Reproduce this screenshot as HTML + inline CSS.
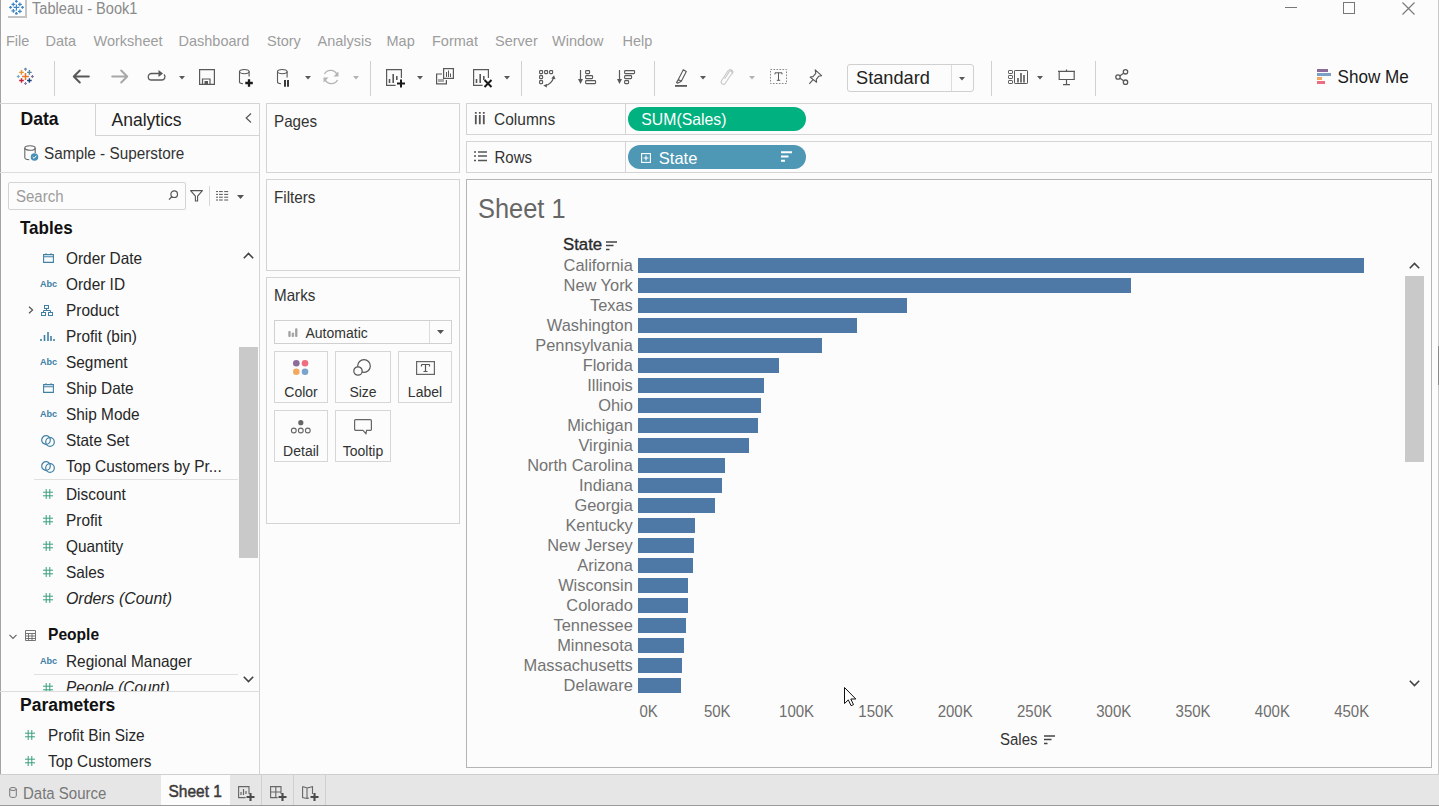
<!DOCTYPE html>
<html><head><meta charset="utf-8">
<style>
*{box-sizing:border-box;margin:0;padding:0}
html,body{width:1439px;height:806px;overflow:hidden;background:#fcfcfc;font-family:"Liberation Sans",sans-serif;color:#333;position:relative}
.a{position:absolute;white-space:nowrap}
.t{position:absolute;white-space:nowrap;line-height:1}
svg{position:absolute;overflow:visible}
</style></head><body>
<div class="a" style="left:0px;top:0px;width:1px;height:806px;background:#a3a3a3;"></div>
<div class="t" style="left:32px;top:1.64px;font-size:14.6px;color:#8a8a8a;transform:scaleY(1.07);transform-origin:0 12.36px;">Tableau - Book1</div>
<div class="t" style="left:6px;top:33.53px;font-size:14.5px;color:#9d9d9d;transform:scaleY(1.07);transform-origin:0 12.27px;">File</div>
<div class="t" style="left:45.5px;top:33.53px;font-size:14.5px;color:#9d9d9d;transform:scaleY(1.07);transform-origin:0 12.27px;">Data</div>
<div class="t" style="left:93.5px;top:33.53px;font-size:14.5px;color:#9d9d9d;transform:scaleY(1.07);transform-origin:0 12.27px;">Worksheet</div>
<div class="t" style="left:178.5px;top:33.53px;font-size:14.5px;color:#9d9d9d;transform:scaleY(1.07);transform-origin:0 12.27px;">Dashboard</div>
<div class="t" style="left:267px;top:33.53px;font-size:14.5px;color:#9d9d9d;transform:scaleY(1.07);transform-origin:0 12.27px;">Story</div>
<div class="t" style="left:317.5px;top:33.53px;font-size:14.5px;color:#9d9d9d;transform:scaleY(1.07);transform-origin:0 12.27px;">Analysis</div>
<div class="t" style="left:386.5px;top:33.53px;font-size:14.5px;color:#9d9d9d;transform:scaleY(1.07);transform-origin:0 12.27px;">Map</div>
<div class="t" style="left:432px;top:33.53px;font-size:14.5px;color:#9d9d9d;transform:scaleY(1.07);transform-origin:0 12.27px;">Format</div>
<div class="t" style="left:495px;top:33.53px;font-size:14.5px;color:#9d9d9d;transform:scaleY(1.07);transform-origin:0 12.27px;">Server</div>
<div class="t" style="left:552px;top:33.53px;font-size:14.5px;color:#9d9d9d;transform:scaleY(1.07);transform-origin:0 12.27px;">Window</div>
<div class="t" style="left:622.5px;top:33.53px;font-size:14.5px;color:#9d9d9d;transform:scaleY(1.07);transform-origin:0 12.27px;">Help</div>
<!-- title icon -->
<div class="a" style="left:8px;top:16px;width:19px;height:2px;background:#c4c4c4"></div>
<div class="a" style="left:25px;top:0;width:2px;height:17px;background:#c4c4c4"></div>
<div class="a" style="left:8px;top:0;width:17px;height:16px;background:#fff"></div>
<svg style="left:8px;top:0" width="17" height="16" viewBox="0 0 17 16">
<g stroke="#3f86c4" stroke-width="1.2">
<path d="M8.4 4.6v5.8M5.6 7.4h5.6"/>
<path d="M5.3 2.5v3.8M3.4 4.3h3.8M11.9 2.5v3.8M10 4.3h3.8M5.3 9v3.8M3.4 10.9h3.8M11.9 9.5v3.8M10 11.4h3.8"/>
<path d="M8.4 0v2.8M7 1.4h2.8M8.4 12v2.8M7 13.5h2.8M2.5 6v2.8M1.1 7.4h2.8M14.5 6v2.8M13.1 7.4h2.8" stroke-width="1.3"/>
</g></svg>
<!-- window controls -->
<div class="a" style="left:1285px;top:7px;width:12px;height:1px;background:#777"></div>
<div class="a" style="left:1343px;top:2px;width:12px;height:12px;border:1px solid #777"></div>
<svg style="left:1402px;top:2px" width="13" height="13" viewBox="0 0 13 13"><path d="M0.5 0.5L12.5 12.5M12.5 0.5L0.5 12.5" stroke="#777" stroke-width="1.1"/></svg>
<div class="a" style="left:1438px;top:0;width:1px;height:806px;background:#c8c8c8"></div>
<!-- toolbar -->
<svg style="left:17px;top:68px" width="18" height="18" viewBox="0 0 18 18">
<g stroke-width="1.5">
<path d="M8.5 5.1v6.8M5.1 8.5h6.8" stroke="#e8762c"/>
<path d="M4.5 2.1v4.6M2.2 4.4h4.6" stroke="#eb912b" stroke-width="1.4"/>
<path d="M12.4 2.1v4.6M10.1 4.4h4.6" stroke="#5b879b" stroke-width="1.4"/>
<path d="M4.5 10.2v4.6M2.2 12.5h4.6" stroke="#c72037" stroke-width="1.4"/>
<path d="M12.4 10.2v4.6M10.1 12.5h4.6" stroke="#1f457e" stroke-width="1.4"/>
<path d="M8.5 -0.3v3M7 1.2h3" stroke="#7087b0" stroke-width="1.2"/>
<path d="M8.5 14v3M7 15.5h3" stroke="#8e7cb8" stroke-width="1.2"/>
<path d="M1.3 7v3M-0.2 8.5h3" stroke="#74a9c4" stroke-width="1.2"/>
<path d="M15.4 7v3M13.9 8.5h3" stroke="#7b74a8" stroke-width="1.2"/>
</g></svg>
<div class="a" style="left:54px;top:61px;width:1px;height:35px;background:#d0d0d0"></div>
<svg style="left:72px;top:69px" width="18" height="16" viewBox="0 0 18 16"><path d="M16.8 7.5H2.5M7.8 1.5L1.8 7.5L7.8 13.5" fill="none" stroke="#595959" stroke-width="2" stroke-linecap="round" stroke-linejoin="round"/></svg>
<svg style="left:111px;top:69px" width="18" height="16" viewBox="0 0 18 16"><path d="M1.2 7.5h14.3M10.2 1.5L16.2 7.5L10.2 13.5" fill="none" stroke="#a8a8a8" stroke-width="2" stroke-linecap="round" stroke-linejoin="round"/></svg>
<svg style="left:147px;top:69px" width="20" height="13" viewBox="0 0 20 13"><path d="M13 4.5H4.5a3.2 3.2 0 0 0 0 6.5h10a3.2 3.2 0 0 0 2.5-5.5" fill="none" stroke="#595959" stroke-width="1.3"/><path d="M11.5 1L16 4.5L11.5 8z" fill="#595959"/></svg>
<svg style="left:179px;top:76px" width="6" height="4" viewBox="0 0 6 4"><path d="M0 0h6L3 3.5z" fill="#595959"/></svg>

<svg style="left:199px;top:69px" width="16" height="16" viewBox="0 0 16 16"><path d="M0.6 0.6h14.8v14.8H0.6z" fill="none" stroke="#595959" stroke-width="1.2"/><path d="M3.5 15.4V10h7.5v5.4" fill="none" stroke="#595959" stroke-width="1.2"/><rect x="5.5" y="12" width="3.5" height="3.4" fill="#595959"/></svg>
<svg style="left:239px;top:69px" width="16" height="19" viewBox="0 0 16 19"><ellipse cx="5.3" cy="2.6" rx="4.8" ry="2.1" fill="none" stroke="#595959" stroke-width="1.1"/><path d="M0.5 2.6v10.4c0 0.9 1.3 1.6 3.5 1.8M10.1 2.6v5" fill="none" stroke="#595959" stroke-width="1.1"/><path d="M10 10.3v7.5M6.3 14h7.5" stroke="#1a1a1a" stroke-width="2.3"/></svg>
<svg style="left:277px;top:69px" width="16" height="19" viewBox="0 0 16 19"><ellipse cx="5.3" cy="2.6" rx="4.8" ry="2.1" fill="none" stroke="#595959" stroke-width="1.1"/><path d="M0.5 2.6v10.4c0 0.9 1.3 1.6 3.5 1.8M10.1 2.6v5.8" fill="none" stroke="#595959" stroke-width="1.1"/><path d="M8 11v6.8M11 11v6.8" stroke="#1a1a1a" stroke-width="1.7"/></svg>
<svg style="left:305px;top:76px" width="6" height="4" viewBox="0 0 6 4"><path d="M0 0h6L3 3.5z" fill="#595959"/></svg>
<svg style="left:322px;top:69px" width="18" height="16" viewBox="0 0 18 16"><path d="M15 5.5A7 7 0 0 0 2.5 5M3 10.5a7 7 0 0 0 12.5 0.5" fill="none" stroke="#b3b3b3" stroke-width="1.4"/><path d="M16.5 2.5v5h-5z M1.5 13.5v-5h5z" fill="#b3b3b3"/></svg>
<svg style="left:353px;top:76px" width="6" height="4" viewBox="0 0 6 4"><path d="M0 0h6L3 3.5z" fill="#b3b3b3"/></svg>
<div class="a" style="left:370px;top:61px;width:1px;height:35px;background:#d0d0d0"></div>
<svg style="left:386px;top:69px" width="20" height="19" viewBox="0 0 20 19"><path d="M15.4 9V0.6H0.6v15.8h9" fill="none" stroke="#595959" stroke-width="1.2"/><path d="M3.5 10v4M7.2 5v9M10.8 7v4" stroke="#595959" stroke-width="1.6"/><path d="M15 10.5v8M11 14.5h8" stroke="#1a1a1a" stroke-width="2"/></svg>
<svg style="left:417px;top:76px" width="6" height="4" viewBox="0 0 6 4"><path d="M0 0h6L3 3.5z" fill="#595959"/></svg>
<svg style="left:436px;top:68px" width="18" height="17" viewBox="0 0 18 17"><rect x="7.6" y="0.6" width="9.8" height="9.8" fill="none" stroke="#595959" stroke-width="1.2"/><path d="M6 6H0.6v9.8h9.8V12" fill="none" stroke="#595959" stroke-width="1.2"/><path d="M10.5 4v5M12.5 2.5v6.5M14.5 5.5v3.5M3 11v3M5 11v3M7 11v3" stroke="#595959" stroke-width="1"/></svg>
<svg style="left:473px;top:69px" width="20" height="19" viewBox="0 0 20 19"><path d="M15.4 9V0.6H0.6v15.8h9" fill="none" stroke="#595959" stroke-width="1.2"/><path d="M3.5 10v4M7.2 5v9M10.8 7v4" stroke="#595959" stroke-width="1.6"/><path d="M11.5 11l7 7M18.5 11l-7 7" stroke="#1a1a1a" stroke-width="2"/></svg>
<svg style="left:504px;top:76px" width="6" height="4" viewBox="0 0 6 4"><path d="M0 0h6L3 3.5z" fill="#595959"/></svg>
<div class="a" style="left:521px;top:61px;width:1px;height:35px;background:#d0d0d0"></div>
<svg style="left:539px;top:70px" width="18" height="18" viewBox="0 0 18 18"><g fill="none" stroke="#595959" stroke-width="1.1"><rect x="0.6" y="0.6" width="3" height="3" rx="0.6"/><rect x="5.6" y="0.6" width="3" height="3" rx="0.6"/><rect x="10.6" y="0.6" width="3" height="3" rx="0.6"/><rect x="0.6" y="5.6" width="3" height="3" rx="0.6"/><rect x="0.6" y="10.6" width="3" height="3" rx="0.6"/><path d="M6.5 15.5Q12.5 14 14.5 8"/></g><path d="M12.3 8.5L15 5.3L16.5 9.3z M8 14L4.2 15.5L7.8 17.5z" fill="#595959"/></svg>
<svg style="left:577px;top:70px" width="20" height="16" viewBox="0 0 20 16"><path d="M3.5 0v10" stroke="#595959" stroke-width="1.2"/><path d="M1 9h5L3.5 14z" fill="#595959"/><rect x="8.6" y="0.6" width="4" height="3" rx="0.8" fill="none" stroke="#595959" stroke-width="1.1"/><rect x="8.6" y="5.6" width="7" height="3" rx="0.8" fill="none" stroke="#595959" stroke-width="1.1"/><rect x="8.6" y="10.6" width="10" height="3" rx="0.8" fill="none" stroke="#595959" stroke-width="1.1"/></svg>
<svg style="left:616px;top:70px" width="20" height="16" viewBox="0 0 20 16"><path d="M3.5 0v10" stroke="#595959" stroke-width="1.2"/><path d="M1 9h5L3.5 14z" fill="#595959"/><rect x="8.6" y="0.6" width="10" height="3" rx="0.8" fill="none" stroke="#595959" stroke-width="1.1"/><rect x="8.6" y="5.6" width="7" height="3" rx="0.8" fill="none" stroke="#595959" stroke-width="1.1"/><rect x="8.6" y="10.6" width="4" height="3" rx="0.8" fill="none" stroke="#595959" stroke-width="1.1"/></svg>
<div class="a" style="left:654px;top:61px;width:1px;height:35px;background:#d0d0d0"></div>
<svg style="left:675px;top:69px" width="13" height="18" viewBox="0 0 13 18"><path d="M8.3 0.7l3 1.7L6.3 12.3l-3-1.7z M3.3 10.6L1.5 13.6l1.2 0.7L6.3 12.3" fill="none" stroke="#595959" stroke-width="1.1" stroke-linejoin="round"/><rect x="0" y="16" width="12" height="1.8" fill="#595959"/></svg>
<svg style="left:700px;top:76px" width="6" height="4" viewBox="0 0 6 4"><path d="M0 0h6L3 3.5z" fill="#595959"/></svg>
<svg style="left:720px;top:69px" width="14" height="16" viewBox="0 0 14 16"><path d="M4.8 9.5L9.3 2.6a1.6 1.6 0 0 1 2.7 1.7L5.3 14.3a2.3 2.3 0 0 1-3.9-2.4L8 1.8a2.6 2.6 0 0 1 4.4 2.8" fill="none" stroke="#c8c8c8" stroke-width="1.1" stroke-linecap="round"/></svg>
<svg style="left:749px;top:76px" width="6" height="4" viewBox="0 0 6 4"><path d="M0 0h6L3 3.5z" fill="#b3b3b3"/></svg>
<svg style="left:770px;top:69px" width="18" height="16" viewBox="0 0 18 16"><rect x="0.5" y="0.5" width="16" height="14" fill="none" stroke="#888" stroke-dasharray="1.6 1.4"/><path d="M5 3.8h7M8.5 3.8v7.5M6.8 11.3h3.4M5 3.8v1.6M12 3.8v1.6" fill="none" stroke="#595959" stroke-width="1"/></svg>
<svg style="left:808px;top:69px" width="15" height="16" viewBox="0 0 15 16"><path d="M7.2 0.8L13.6 6.6L10.8 7.2L8.3 10.3L8.6 13.3L2.1 8.1L5 7.6L7.8 4.3z M4.8 10.8L1.3 14.9" fill="none" stroke="#595959" stroke-width="1.1" stroke-linejoin="round"/></svg>
<div class="a" style="left:847px;top:64px;width:127px;height:28px;border:1px solid #d0d0d0;border-radius:3px;background:#fcfcfc"></div>
<div class="a" style="left:951px;top:65px;width:1px;height:26px;background:#dcdcdc"></div>
<div class="t" style="left:856px;top:69.2px;font-size:18.2px;color:#222">Standard</div>
<svg style="left:959px;top:77px" width="6" height="4" viewBox="0 0 6 4"><path d="M0 0h6L3 3.5z" fill="#595959"/></svg>
<div class="a" style="left:991px;top:61px;width:1px;height:35px;background:#d0d0d0"></div>
<svg style="left:1008px;top:70px" width="21" height="15" viewBox="0 0 21 15"><g fill="none" stroke="#595959" stroke-width="1"><rect x="0.5" y="0.5" width="4" height="3" rx="0.6"/><rect x="0.5" y="5.5" width="4" height="3" rx="0.6"/><rect x="0.5" y="10.5" width="4" height="3" rx="0.6"/><rect x="6.5" y="0.5" width="13" height="13" rx="0.6"/></g><path d="M10 8v4.5M13 3v9.5M16 5v7.5" stroke="#595959" stroke-width="1.6"/></svg>
<svg style="left:1037px;top:76px" width="6" height="4" viewBox="0 0 6 4"><path d="M0 0h6L3 3.5z" fill="#595959"/></svg>
<svg style="left:1058px;top:69px" width="18" height="17" viewBox="0 0 18 17"><path d="M8.5 0.5v1.5M0 2.3h17M1.2 2.3v8.2h15v-8.2M8.5 10.5v5M5 15.6h7" fill="none" stroke="#595959" stroke-width="1.2"/></svg>
<div class="a" style="left:1095px;top:61px;width:1px;height:35px;background:#d0d0d0"></div>
<svg style="left:1114px;top:69px" width="16" height="17" viewBox="0 0 16 17"><g fill="none" stroke="#595959" stroke-width="1.3"><circle cx="11.5" cy="2.8" r="2.2"/><circle cx="4" cy="8" r="2.2"/><circle cx="11.5" cy="13.2" r="2.2"/><path d="M6 6.7L9.6 4.2M6 9.3L9.6 11.8"/></g></svg>
<div class="a" style="left:1317px;top:69px;width:11px;height:3px;background:#8d6b99"></div>
<div class="a" style="left:1317px;top:73px;width:14px;height:3px;background:#7c9fc7"></div>
<div class="a" style="left:1317px;top:77px;width:5px;height:3px;background:#f2a95e"></div>
<div class="a" style="left:1317px;top:81px;width:8px;height:3px;background:#ec6d7f"></div>
<div class="t" style="left:1337.5px;top:68.8px;font-size:17.1px;color:#1a1a1a;transform:scaleY(1.07);transform-origin:0 14.4px">Show Me</div>

<!-- left panel -->


<div class="a" style="left:0px;top:103px;width:260px;height:1px;background:#d4d4d4;"></div>
<div class="a" style="left:259px;top:103px;width:1px;height:671px;background:#d4d4d4;"></div>
<div class="a" style="left:95px;top:103px;width:1px;height:33px;background:#d4d4d4;"></div>
<div class="a" style="left:95px;top:135px;width:165px;height:1px;background:#d4d4d4;"></div>
<div class="t" style="left:20.5px;top:111.1px;font-size:17.6px;color:#111;font-weight:700;transform:scaleY(1.07);transform-origin:0 14.9px;">Data</div>
<div class="t" style="left:111.5px;top:112.19px;font-size:17.5px;color:#222;transform:scaleY(1.07);transform-origin:0 14.81px;">Analytics</div>
<svg style="left:245px;top:113px" width="7" height="10" viewBox="0 0 7 10"><path d="M6 0.5L1.2 5L6 9.5" fill="none" stroke="#555" stroke-width="1.2"/></svg>
<svg style="left:24px;top:145px" width="16" height="17" viewBox="0 0 16 17"><ellipse cx="6" cy="3" rx="5.2" ry="2.3" fill="none" stroke="#666" stroke-width="1.1"/><path d="M0.8 3v9.5c0 1.2 2 2.1 4.5 2.3M11.2 3v5" fill="none" stroke="#666" stroke-width="1.1"/><circle cx="10.5" cy="12" r="3.8" fill="#4a8fb5"/><path d="M8.7 12l1.3 1.3l2.4-2.6" fill="none" stroke="#fff" stroke-width="1"/></svg>
<div class="t" style="left:44px;top:146.05px;font-size:15.3px;color:#333;transform:scaleY(1.07);transform-origin:0 12.95px;">Sample - Superstore</div>
<div class="a" style="left:0px;top:172px;width:259px;height:1px;background:#dcdcdc;"></div>
<div class="a" style="left:8px;top:182px;width:178px;height:28px;border:1px solid #d4d4d4;border-radius:2px;background:#fcfcfc"></div>
<div class="t" style="left:16px;top:189.3px;font-size:15px;color:#9b9b9b;transform:scaleY(1.07);transform-origin:0 12.7px;">Search</div>
<svg style="left:168px;top:189px" width="12" height="12" viewBox="0 0 12 12"><circle cx="6.2" cy="5.2" r="3.3" fill="none" stroke="#555" stroke-width="1.2"/><path d="M4 7.5L1 10.6" stroke="#555" stroke-width="1.3"/></svg>
<svg style="left:190px;top:190px" width="13" height="12" viewBox="0 0 13 12"><path d="M0.6 0.6h11.8L7.6 6.2v4.8h-2.2V6.2z" fill="none" stroke="#555" stroke-width="1.1" stroke-linejoin="round"/></svg>
<div class="a" style="left:209px;top:186px;width:1px;height:20px;background:#d8d8d8;"></div>
<svg style="left:216px;top:190.5px" width="13" height="10" viewBox="0 0 13 10"><path d="M0 0.6h2M0 3.4h2M0 6.2h2M0 9h2M3 0.6h3.8M3 3.4h3.8M3 6.2h3.8M3 9h3.8M8.2 0.6h4M8.2 3.4h4M8.2 6.2h4M8.2 9h4" stroke="#555" stroke-width="1"/></svg>
<svg style="left:237px;top:195px" width="7" height="4" viewBox="0 0 7 4"><path d="M0 0h7L3.5 4z" fill="#555"/></svg>
<div class="t" style="left:20px;top:219.61px;font-size:17px;color:#111;font-weight:700;transform:scaleY(1.07);transform-origin:0 14.39px;">Tables</div>
<svg style="left:243px;top:252px" width="11" height="7" viewBox="0 0 11 7"><path d="M0.8 6.3L5.5 1.5L10.2 6.3" fill="none" stroke="#444" stroke-width="1.6"/></svg>
<svg style="left:42.5px;top:253px" width="11" height="10" viewBox="0 0 11 10"><path d="M0.6 1.6h9.8v7.8H0.6z M0.6 3.8h9.8 M3 0.2v2 M8 0.2v2" fill="none" stroke="#3f80a6" stroke-width="1.1"/></svg>
<div class="t" style="left:66px;top:250.96px;font-size:15.4px;color:#262626;transform:scaleY(1.07);transform-origin:0 13.04px;">Order Date</div>
<div class="t" style="left:40px;top:279px;font-size:9.6px;font-weight:700;color:#3f80a6;letter-spacing:-0.1px;transform:scaleX(0.95);transform-origin:0 0">Abc</div>
<div class="t" style="left:66px;top:276.96px;font-size:15.4px;color:#262626;transform:scaleY(1.07);transform-origin:0 13.04px;">Order ID</div>
<svg style="left:41px;top:305px" width="12" height="11" viewBox="0 0 12 11"><g fill="none" stroke="#3f80a6" stroke-width="1"><rect x="3.5" y="0.5" width="4" height="3"/><rect x="0.5" y="7.5" width="4" height="3"/><rect x="7.5" y="7.5" width="4" height="3"/><path d="M5.5 3.5v2M2.5 7.5V5.5h7v2"/></g></svg>
<div class="t" style="left:66px;top:302.96px;font-size:15.4px;color:#262626;transform:scaleY(1.07);transform-origin:0 13.04px;">Product</div>
<svg style="left:40px;top:331px" width="15" height="10" viewBox="0 0 15 10"><path d="M1 8v2M4.5 4v6M8 1v9M11 5v5M14 8v2" stroke="#3f80a6" stroke-width="1.6"/></svg>
<div class="t" style="left:66px;top:328.96px;font-size:15.4px;color:#262626;transform:scaleY(1.07);transform-origin:0 13.04px;">Profit (bin)</div>
<div class="t" style="left:40px;top:357px;font-size:9.6px;font-weight:700;color:#3f80a6;letter-spacing:-0.1px;transform:scaleX(0.95);transform-origin:0 0">Abc</div>
<div class="t" style="left:66px;top:354.96px;font-size:15.4px;color:#262626;transform:scaleY(1.07);transform-origin:0 13.04px;">Segment</div>
<svg style="left:42.5px;top:383px" width="11" height="10" viewBox="0 0 11 10"><path d="M0.6 1.6h9.8v7.8H0.6z M0.6 3.8h9.8 M3 0.2v2 M8 0.2v2" fill="none" stroke="#3f80a6" stroke-width="1.1"/></svg>
<div class="t" style="left:66px;top:380.96px;font-size:15.4px;color:#262626;transform:scaleY(1.07);transform-origin:0 13.04px;">Ship Date</div>
<div class="t" style="left:40px;top:409px;font-size:9.6px;font-weight:700;color:#3f80a6;letter-spacing:-0.1px;transform:scaleX(0.95);transform-origin:0 0">Abc</div>
<div class="t" style="left:66px;top:406.96px;font-size:15.4px;color:#262626;transform:scaleY(1.07);transform-origin:0 13.04px;">Ship Mode</div>
<svg style="left:41px;top:435px" width="14" height="12" viewBox="0 0 14 12"><circle cx="5" cy="5" r="4.3" fill="none" stroke="#3f80a6" stroke-width="1.2"/><circle cx="9" cy="7" r="4.3" fill="none" stroke="#3f80a6" stroke-width="1.2"/></svg>
<div class="t" style="left:66px;top:432.96px;font-size:15.4px;color:#262626;transform:scaleY(1.07);transform-origin:0 13.04px;">State Set</div>
<svg style="left:41px;top:461px" width="14" height="12" viewBox="0 0 14 12"><circle cx="5" cy="5" r="4.3" fill="none" stroke="#3f80a6" stroke-width="1.2"/><circle cx="9" cy="7" r="4.3" fill="none" stroke="#3f80a6" stroke-width="1.2"/></svg>
<div class="t" style="left:66px;top:458.96px;font-size:15.4px;color:#262626;transform:scaleY(1.07);transform-origin:0 13.04px;">Top Customers by Pr...</div>
<svg style="left:28px;top:306px" width="6" height="8" viewBox="0 0 6 8"><path d="M1 0.7L4.6 4L1 7.3" fill="none" stroke="#555" stroke-width="1.2"/></svg>
<div class="a" style="left:34px;top:479px;width:204px;height:1px;background:#e0e0e0;"></div>
<svg style="left:43px;top:489px" width="10" height="10" viewBox="0 0 10 10"><path d="M3.2 0v10M6.8 0v10M0 3.2h10M0 6.8h10" stroke="#3a9f7f" stroke-width="1"/></svg>
<div class="t" style="left:66px;top:486.96px;font-size:15.4px;color:#262626;transform:scaleY(1.07);transform-origin:0 13.04px;">Discount</div>
<svg style="left:43px;top:515px" width="10" height="10" viewBox="0 0 10 10"><path d="M3.2 0v10M6.8 0v10M0 3.2h10M0 6.8h10" stroke="#3a9f7f" stroke-width="1"/></svg>
<div class="t" style="left:66px;top:512.96px;font-size:15.4px;color:#262626;transform:scaleY(1.07);transform-origin:0 13.04px;">Profit</div>
<svg style="left:43px;top:541px" width="10" height="10" viewBox="0 0 10 10"><path d="M3.2 0v10M6.8 0v10M0 3.2h10M0 6.8h10" stroke="#3a9f7f" stroke-width="1"/></svg>
<div class="t" style="left:66px;top:538.96px;font-size:15.4px;color:#262626;transform:scaleY(1.07);transform-origin:0 13.04px;">Quantity</div>
<svg style="left:43px;top:567px" width="10" height="10" viewBox="0 0 10 10"><path d="M3.2 0v10M6.8 0v10M0 3.2h10M0 6.8h10" stroke="#3a9f7f" stroke-width="1"/></svg>
<div class="t" style="left:66px;top:564.96px;font-size:15.4px;color:#262626;transform:scaleY(1.07);transform-origin:0 13.04px;">Sales</div>
<svg style="left:43px;top:593px" width="10" height="10" viewBox="0 0 10 10"><path d="M3.2 0v10M6.8 0v10M0 3.2h10M0 6.8h10" stroke="#3a9f7f" stroke-width="1"/></svg>
<div class="t" style="left:66px;top:590.54px;font-size:15.9px;color:#262626;font-style:italic;transform:scaleY(1.07);transform-origin:0 13.46px;">Orders (Count)</div>
<div class="a" style="left:239px;top:347px;width:19px;height:211px;background:#c9c9c9;"></div>
<svg style="left:9px;top:634px" width="8" height="6" viewBox="0 0 8 6"><path d="M0.5 0.8L4 4.5L7.5 0.8" fill="none" stroke="#666" stroke-width="1.2"/></svg>
<svg style="left:25px;top:630px" width="11" height="11" viewBox="0 0 11 11"><path d="M0.5 0.5h10v10h-10z M0.5 3.5h10 M0.5 6h10 M0.5 8.5h10 M3.5 3.5v7 M7 3.5v7" fill="none" stroke="#666" stroke-width="0.9"/></svg>
<div class="t" style="left:48px;top:626.79px;font-size:15.6px;color:#111;font-weight:700;transform:scaleY(1.07);transform-origin:0 13.21px;">People</div>
<div class="t" style="left:40px;top:656px;font-size:9.6px;font-weight:700;color:#3f80a6;letter-spacing:-0.1px;transform:scaleX(0.95);transform-origin:0 0">Abc</div>
<div class="t" style="left:66px;top:653.96px;font-size:15.4px;color:#262626;transform:scaleY(1.07);transform-origin:0 13.04px;">Regional Manager</div>
<div class="a" style="left:34px;top:674px;width:204px;height:1px;background:#e0e0e0;"></div>
<div class="a" style="left:0;top:676px;width:238px;height:15px;overflow:hidden"><svg style="left:43px;top:7px" width="10" height="10" viewBox="0 0 10 10"><path d="M3.2 0v10M6.8 0v10M0 3.2h10M0 6.8h10" stroke="#3a9f7f" stroke-width="1"/></svg>
<div class="t" style="left:66px;top:3.96px;font-size:15.4px;color:#262626;font-style:italic;transform:scaleY(1.07);transform-origin:0 13.04px;">People (Count)</div>
</div>
<svg style="left:243px;top:676px" width="11" height="7" viewBox="0 0 11 7"><path d="M0.8 0.7L5.5 5.5L10.2 0.7" fill="none" stroke="#444" stroke-width="1.6"/></svg>
<div class="a" style="left:0px;top:691px;width:259px;height:1px;background:#dcdcdc;"></div>
<div class="t" style="left:20px;top:697.19px;font-size:17.5px;color:#111;font-weight:700;transform:scaleY(1.07);transform-origin:0 14.81px;">Parameters</div>
<svg style="left:25px;top:730px" width="10" height="10" viewBox="0 0 10 10"><path d="M3.2 0v10M6.8 0v10M0 3.2h10M0 6.8h10" stroke="#3a9f7f" stroke-width="1"/></svg>
<div class="t" style="left:48px;top:727.96px;font-size:15.4px;color:#262626;transform:scaleY(1.07);transform-origin:0 13.04px;">Profit Bin Size</div>
<svg style="left:25px;top:756px" width="10" height="10" viewBox="0 0 10 10"><path d="M3.2 0v10M6.8 0v10M0 3.2h10M0 6.8h10" stroke="#3a9f7f" stroke-width="1"/></svg>
<div class="t" style="left:48px;top:753.96px;font-size:15.4px;color:#262626;transform:scaleY(1.07);transform-origin:0 13.04px;">Top Customers</div>
<div class="a" style="left:266px;top:103px;width:194px;height:70px;border:1px solid #d4d4d4;background:#fcfcfc;"></div>
<div class="t" style="left:274px;top:114.13px;font-size:15.2px;color:#333;transform:scaleY(1.07);transform-origin:0 12.87px;">Pages</div>
<div class="a" style="left:266px;top:179px;width:194px;height:92px;border:1px solid #d4d4d4;background:#fcfcfc;"></div>
<div class="t" style="left:274px;top:190.13px;font-size:15.2px;color:#333;transform:scaleY(1.07);transform-origin:0 12.87px;">Filters</div>
<div class="a" style="left:266px;top:277px;width:194px;height:247px;border:1px solid #d4d4d4;background:#fcfcfc;"></div>
<div class="t" style="left:274px;top:288.13px;font-size:15.2px;color:#333;transform:scaleY(1.07);transform-origin:0 12.87px;">Marks</div>
<div class="a" style="left:274px;top:320px;width:178px;height:24px;border:1px solid #d0d0d0;background:#fcfcfc;"></div>
<div class="a" style="left:429px;top:321px;width:1px;height:22px;background:#dcdcdc;"></div>
<svg style="left:437px;top:330px" width="7" height="4" viewBox="0 0 7 4"><path d="M0 0h7L3.5 4z" fill="#555"/></svg>
<svg style="left:288px;top:327.5px" width="10" height="9" viewBox="0 0 10 9"><path d="M0.8 3.5h1.4v5H0.8z M4.2 5h1.4v3.5H4.2z M7.6 0.8h1.4v7.7H7.6z" fill="#aaa" stroke="#999" stroke-width="0.8"/></svg>
<div class="t" style="left:305.5px;top:325.65px;font-size:14px;color:#333;transform:scaleY(1.07);transform-origin:0 11.85px;">Automatic</div>
<div class="a" style="left:274px;top:351px;width:54px;height:52px;border:1px solid #d6d6d6;background:#fcfcfc;"></div>
<div class="a" style="left:335px;top:351px;width:56px;height:52px;border:1px solid #d6d6d6;background:#fcfcfc;"></div>
<div class="a" style="left:398px;top:351px;width:54px;height:52px;border:1px solid #d6d6d6;background:#fcfcfc;"></div>
<div class="a" style="left:274px;top:410px;width:54px;height:52px;border:1px solid #d6d6d6;background:#fcfcfc;"></div>
<div class="a" style="left:335px;top:410px;width:56px;height:52px;border:1px solid #d6d6d6;background:#fcfcfc;"></div>
<svg style="left:292px;top:359px" width="18" height="17" viewBox="0 0 18 17"><circle cx="4.3" cy="4.3" r="3.3" fill="#8b6c9b"/><circle cx="13" cy="4.3" r="3.3" fill="#ee6f7d"/><circle cx="4.3" cy="12.8" r="3.3" fill="#f2a95e"/><circle cx="13" cy="12.8" r="3.3" fill="#7ba3cc"/></svg>
<div class="t" style="left:201px;width:200px;text-align:center;top:385.15px;font-size:14px;color:#333;transform:scaleY(1.07);transform-origin:50% 11.85px;">Color</div>
<svg style="left:353px;top:359px" width="19" height="17" viewBox="0 0 19 17"><circle cx="11" cy="7" r="6.3" fill="none" stroke="#555" stroke-width="1.2"/><circle cx="5" cy="12" r="4.2" fill="#fcfcfc" stroke="#555" stroke-width="1.2"/></svg>
<div class="t" style="left:263px;width:200px;text-align:center;top:385.15px;font-size:14px;color:#333;transform:scaleY(1.07);transform-origin:50% 11.85px;">Size</div>
<svg style="left:416px;top:361px" width="19" height="14" viewBox="0 0 19 14"><rect x="0.6" y="0.6" width="17.8" height="12.8" fill="none" stroke="#666" stroke-width="1.2"/><path d="M5.5 3.5h8M9.5 3.5v7M7.5 10.5h4M5.5 3.5v2M13.5 3.5v2" fill="none" stroke="#555" stroke-width="1.2"/></svg>
<div class="t" style="left:325px;width:200px;text-align:center;top:385.15px;font-size:14px;color:#333;transform:scaleY(1.07);transform-origin:50% 11.85px;">Label</div>
<svg style="left:291px;top:420px" width="20" height="14" viewBox="0 0 20 14"><circle cx="9.8" cy="2.7" r="2.6" fill="#666"/><circle cx="2.8" cy="10.5" r="2.4" fill="none" stroke="#666" stroke-width="1.1"/><circle cx="9.8" cy="10.5" r="2.4" fill="none" stroke="#666" stroke-width="1.1"/><circle cx="16.8" cy="10.5" r="2.4" fill="none" stroke="#666" stroke-width="1.1"/></svg>
<div class="t" style="left:201px;width:200px;text-align:center;top:444.15px;font-size:14px;color:#333;transform:scaleY(1.07);transform-origin:50% 11.85px;">Detail</div>
<svg style="left:354px;top:419px" width="18" height="16" viewBox="0 0 18 16"><path d="M1.8 0.6h14.4a1.2 1.2 0 0 1 1.2 1.2v8.4a1.2 1.2 0 0 1-1.2 1.2H12.5L12 14.8L9 11.4H1.8a1.2 1.2 0 0 1-1.2-1.2V1.8a1.2 1.2 0 0 1 1.2-1.2z" fill="none" stroke="#666" stroke-width="1.2" stroke-linejoin="round"/></svg>
<div class="t" style="left:263px;width:200px;text-align:center;top:444.15px;font-size:14px;color:#333;transform:scaleY(1.07);transform-origin:50% 11.85px;">Tooltip</div>
<div class="a" style="left:466px;top:103px;width:966px;height:32px;border:1px solid #d4d4d4;background:#fcfcfc;"></div>
<div class="a" style="left:625px;top:104px;width:1px;height:30px;background:#d4d4d4;"></div>
<svg style="left:474px;top:112px" width="12" height="13" viewBox="0 0 12 13"><path d="M1.8 0v1.8M5.8 0v1.8M9.8 0v1.8M1.8 3v9.3M5.8 3v9.3M9.8 3v9.3" stroke="#555" stroke-width="1.8"/></svg>
<div class="t" style="left:494px;top:111.88px;font-size:15.5px;color:#333;transform:scaleY(1.07);transform-origin:0 13.12px;">Columns</div>
<div class="a" style="left:628px;top:107px;width:178px;height:24px;border-radius:12px;background:#01b180"></div>
<div class="t" style="left:641.3px;top:112.13px;font-size:15.8px;color:#fff;transform:scaleY(1.07);transform-origin:0 13.37px;">SUM(Sales)</div>
<div class="a" style="left:466px;top:141px;width:966px;height:32px;border:1px solid #d4d4d4;background:#fcfcfc;"></div>
<div class="a" style="left:625px;top:142px;width:1px;height:30px;background:#d4d4d4;"></div>
<svg style="left:474px;top:151px" width="13" height="11" viewBox="0 0 13 11"><path d="M0 1h2M0 5h2M0 9.5h2M4 1h9M4 5h9M4 9.5h9" stroke="#555" stroke-width="1.7"/></svg>
<div class="t" style="left:494.5px;top:150.3px;font-size:15px;color:#333;transform:scaleY(1.07);transform-origin:0 12.7px;">Rows</div>
<div class="a" style="left:628px;top:145px;width:178px;height:24px;border-radius:12px;background:#4e97b5"></div>
<svg style="left:641px;top:153px" width="10" height="10" viewBox="0 0 10 10"><rect x="0.6" y="0.6" width="8.8" height="8.8" fill="none" stroke="#fff" stroke-width="1.1"/><path d="M5 2.5v5M2.5 5h5" stroke="#fff" stroke-width="1.1"/></svg>
<div class="t" style="left:658.8px;top:150.23px;font-size:16.5px;color:#fff;transform:scaleY(1.07);transform-origin:0 13.97px;transform:none;">State</div>
<svg style="left:781px;top:151px" width="11" height="11" viewBox="0 0 11 11"><path d="M0 1.2h11M0 5.5h7.5M0 9.8h4" stroke="#fff" stroke-width="2"/></svg>
<div class="a" style="left:466px;top:179px;width:966px;height:589px;border:1px solid #b5b5b5;background:#fcfcfc;"></div>
<div class="t" style="left:478px;top:196.5px;font-size:25.4px;color:#666;transform:scaleY(1.07);transform-origin:0 21.5px;">Sheet 1</div>
<div class="t" style="left:563px;top:236.78px;font-size:16.8px;color:#2a2a2a;transform:scaleY(1.07);transform-origin:0 14.22px;-webkit-text-stroke:0.35px #2a2a2a;transform:none;">State</div>
<svg style="left:605.5px;top:241px" width="11" height="10" viewBox="0 0 11 10"><path d="M0 1h11M0 4.5h7.5M0 8.5h3.5" stroke="#444" stroke-width="1.6"/></svg>
<div class="a" style="left:638px;top:258px;width:726px;height:15px;background:#4e79a7;"></div>
<div class="t" style="right:806.2px;top:257.12px;font-size:16.4px;color:#737373;transform:scaleY(1.07);transform-origin:100% 13.88px;transform:none;">California</div>
<div class="a" style="left:638px;top:278px;width:493px;height:15px;background:#4e79a7;"></div>
<div class="t" style="right:806.2px;top:277.12px;font-size:16.4px;color:#737373;transform:scaleY(1.07);transform-origin:100% 13.88px;transform:none;">New York</div>
<div class="a" style="left:638px;top:298px;width:269px;height:15px;background:#4e79a7;"></div>
<div class="t" style="right:806.2px;top:297.12px;font-size:16.4px;color:#737373;transform:scaleY(1.07);transform-origin:100% 13.88px;transform:none;">Texas</div>
<div class="a" style="left:638px;top:318px;width:219px;height:15px;background:#4e79a7;"></div>
<div class="t" style="right:806.2px;top:317.12px;font-size:16.4px;color:#737373;transform:scaleY(1.07);transform-origin:100% 13.88px;transform:none;">Washington</div>
<div class="a" style="left:638px;top:338px;width:184px;height:15px;background:#4e79a7;"></div>
<div class="t" style="right:806.2px;top:337.12px;font-size:16.4px;color:#737373;transform:scaleY(1.07);transform-origin:100% 13.88px;transform:none;">Pennsylvania</div>
<div class="a" style="left:638px;top:358px;width:141px;height:15px;background:#4e79a7;"></div>
<div class="t" style="right:806.2px;top:357.12px;font-size:16.4px;color:#737373;transform:scaleY(1.07);transform-origin:100% 13.88px;transform:none;">Florida</div>
<div class="a" style="left:638px;top:378px;width:126px;height:15px;background:#4e79a7;"></div>
<div class="t" style="right:806.2px;top:377.12px;font-size:16.4px;color:#737373;transform:scaleY(1.07);transform-origin:100% 13.88px;transform:none;">Illinois</div>
<div class="a" style="left:638px;top:398px;width:123px;height:15px;background:#4e79a7;"></div>
<div class="t" style="right:806.2px;top:397.12px;font-size:16.4px;color:#737373;transform:scaleY(1.07);transform-origin:100% 13.88px;transform:none;">Ohio</div>
<div class="a" style="left:638px;top:418px;width:120px;height:15px;background:#4e79a7;"></div>
<div class="t" style="right:806.2px;top:417.12px;font-size:16.4px;color:#737373;transform:scaleY(1.07);transform-origin:100% 13.88px;transform:none;">Michigan</div>
<div class="a" style="left:638px;top:438px;width:111px;height:15px;background:#4e79a7;"></div>
<div class="t" style="right:806.2px;top:437.12px;font-size:16.4px;color:#737373;transform:scaleY(1.07);transform-origin:100% 13.88px;transform:none;">Virginia</div>
<div class="a" style="left:638px;top:458px;width:87px;height:15px;background:#4e79a7;"></div>
<div class="t" style="right:806.2px;top:457.12px;font-size:16.4px;color:#737373;transform:scaleY(1.07);transform-origin:100% 13.88px;transform:none;">North Carolina</div>
<div class="a" style="left:638px;top:478px;width:84px;height:15px;background:#4e79a7;"></div>
<div class="t" style="right:806.2px;top:477.12px;font-size:16.4px;color:#737373;transform:scaleY(1.07);transform-origin:100% 13.88px;transform:none;">Indiana</div>
<div class="a" style="left:638px;top:498px;width:77px;height:15px;background:#4e79a7;"></div>
<div class="t" style="right:806.2px;top:497.12px;font-size:16.4px;color:#737373;transform:scaleY(1.07);transform-origin:100% 13.88px;transform:none;">Georgia</div>
<div class="a" style="left:638px;top:518px;width:57px;height:15px;background:#4e79a7;"></div>
<div class="t" style="right:806.2px;top:517.12px;font-size:16.4px;color:#737373;transform:scaleY(1.07);transform-origin:100% 13.88px;transform:none;">Kentucky</div>
<div class="a" style="left:638px;top:538px;width:56px;height:15px;background:#4e79a7;"></div>
<div class="t" style="right:806.2px;top:537.12px;font-size:16.4px;color:#737373;transform:scaleY(1.07);transform-origin:100% 13.88px;transform:none;">New Jersey</div>
<div class="a" style="left:638px;top:558px;width:55px;height:15px;background:#4e79a7;"></div>
<div class="t" style="right:806.2px;top:557.12px;font-size:16.4px;color:#737373;transform:scaleY(1.07);transform-origin:100% 13.88px;transform:none;">Arizona</div>
<div class="a" style="left:638px;top:578px;width:50px;height:15px;background:#4e79a7;"></div>
<div class="t" style="right:806.2px;top:577.12px;font-size:16.4px;color:#737373;transform:scaleY(1.07);transform-origin:100% 13.88px;transform:none;">Wisconsin</div>
<div class="a" style="left:638px;top:598px;width:50px;height:15px;background:#4e79a7;"></div>
<div class="t" style="right:806.2px;top:597.12px;font-size:16.4px;color:#737373;transform:scaleY(1.07);transform-origin:100% 13.88px;transform:none;">Colorado</div>
<div class="a" style="left:638px;top:618px;width:48px;height:15px;background:#4e79a7;"></div>
<div class="t" style="right:806.2px;top:617.12px;font-size:16.4px;color:#737373;transform:scaleY(1.07);transform-origin:100% 13.88px;transform:none;">Tennessee</div>
<div class="a" style="left:638px;top:638px;width:46px;height:15px;background:#4e79a7;"></div>
<div class="t" style="right:806.2px;top:637.12px;font-size:16.4px;color:#737373;transform:scaleY(1.07);transform-origin:100% 13.88px;transform:none;">Minnesota</div>
<div class="a" style="left:638px;top:658px;width:44px;height:15px;background:#4e79a7;"></div>
<div class="t" style="right:806.2px;top:657.12px;font-size:16.4px;color:#737373;transform:scaleY(1.07);transform-origin:100% 13.88px;transform:none;">Massachusetts</div>
<div class="a" style="left:638px;top:678px;width:43px;height:15px;background:#4e79a7;"></div>
<div class="t" style="right:806.2px;top:677.12px;font-size:16.4px;color:#737373;transform:scaleY(1.07);transform-origin:100% 13.88px;transform:none;">Delaware</div>
<div class="t" style="left:639.5px;top:704.3px;font-size:15px;color:#6e6e6e;transform:scaleY(1.07);transform-origin:0 12.7px;">0K</div>
<div class="t" style="left:617.3px;width:200px;text-align:center;top:704.3px;font-size:15px;color:#6e6e6e;transform:scaleY(1.07);transform-origin:50% 12.7px;">50K</div>
<div class="t" style="left:696.6px;width:200px;text-align:center;top:704.3px;font-size:15px;color:#6e6e6e;transform:scaleY(1.07);transform-origin:50% 12.7px;">100K</div>
<div class="t" style="left:775.9px;width:200px;text-align:center;top:704.3px;font-size:15px;color:#6e6e6e;transform:scaleY(1.07);transform-origin:50% 12.7px;">150K</div>
<div class="t" style="left:855.2px;width:200px;text-align:center;top:704.3px;font-size:15px;color:#6e6e6e;transform:scaleY(1.07);transform-origin:50% 12.7px;">200K</div>
<div class="t" style="left:934.5px;width:200px;text-align:center;top:704.3px;font-size:15px;color:#6e6e6e;transform:scaleY(1.07);transform-origin:50% 12.7px;">250K</div>
<div class="t" style="left:1013.8px;width:200px;text-align:center;top:704.3px;font-size:15px;color:#6e6e6e;transform:scaleY(1.07);transform-origin:50% 12.7px;">300K</div>
<div class="t" style="left:1093.1px;width:200px;text-align:center;top:704.3px;font-size:15px;color:#6e6e6e;transform:scaleY(1.07);transform-origin:50% 12.7px;">350K</div>
<div class="t" style="left:1172.4px;width:200px;text-align:center;top:704.3px;font-size:15px;color:#6e6e6e;transform:scaleY(1.07);transform-origin:50% 12.7px;">400K</div>
<div class="t" style="left:1251.7px;width:200px;text-align:center;top:704.3px;font-size:15px;color:#6e6e6e;transform:scaleY(1.07);transform-origin:50% 12.7px;">450K</div>
<div class="t" style="left:1000px;top:731.9px;font-size:15px;color:#333;transform:scaleY(1.07);transform-origin:0 12.7px;">Sales</div>
<svg style="left:1043.5px;top:735px" width="11" height="10" viewBox="0 0 11 10"><path d="M0 1h11M0 4.5h7.5M0 8.5h3.5" stroke="#444" stroke-width="1.6"/></svg>
<svg style="left:1409px;top:262px" width="11" height="7" viewBox="0 0 11 7"><path d="M0.8 6.3L5.5 1.5L10.2 6.3" fill="none" stroke="#444" stroke-width="1.6"/></svg>
<div class="a" style="left:1405px;top:276px;width:19px;height:186px;background:#c9c9c9;"></div>
<svg style="left:1409px;top:680px" width="11" height="7" viewBox="0 0 11 7"><path d="M0.8 0.7L5.5 5.5L10.2 0.7" fill="none" stroke="#444" stroke-width="1.6"/></svg>
<svg style="left:844px;top:687px" width="13" height="20" viewBox="0 0 13 20"><path d="M0.5 0.5v16l3.8-3.6l2.8 5.8l2.4-1.1l-2.7-5.6h5z" fill="#fff" stroke="#111" stroke-width="1"/></svg>
<div class="a" style="left:0px;top:774px;width:1439px;height:32px;background:#e6e6e6;border-top:1px solid #cfcfcf"></div>
<svg style="left:9px;top:787px" width="8" height="11" viewBox="0 0 8 11"><ellipse cx="4" cy="2" rx="3.3" ry="1.5" fill="none" stroke="#777" stroke-width="1"/><path d="M0.7 2v7c0 0.9 1.5 1.5 3.3 1.5s3.3-0.6 3.3-1.5V2" fill="none" stroke="#777" stroke-width="1"/></svg>
<div class="t" style="left:23px;top:786.3px;font-size:15px;color:#777;transform:scaleY(1.07);transform-origin:0 12.7px;">Data Source</div>
<div class="a" style="left:161px;top:775px;width:69px;height:31px;background:#fcfcfc;"></div>
<div class="t" style="left:168.5px;top:784.38px;font-size:15.5px;color:#3a3a3a;transform:scaleY(1.07);transform-origin:0 13.12px;-webkit-text-stroke:0.45px #3a3a3a;">Sheet 1</div>
<div class="a" style="left:261px;top:774px;width:1px;height:32px;background:#d0d0d0;"></div>
<div class="a" style="left:293px;top:774px;width:1px;height:32px;background:#d0d0d0;"></div>
<div class="a" style="left:325px;top:774px;width:1px;height:32px;background:#d0d0d0;"></div>
<svg style="left:238px;top:786px" width="17" height="15" viewBox="0 0 17 15"><path d="M11 8V0.6H0.6v11h7" fill="none" stroke="#666" stroke-width="1.1"/><path d="M3 6v3M5.5 3v6M8 5v3" stroke="#666" stroke-width="1.2"/><path d="M12.5 7v8M8.5 11h8" stroke="#4a4a4a" stroke-width="2.1"/></svg>
<svg style="left:270px;top:786px" width="17" height="15" viewBox="0 0 17 15"><path d="M11 8V0.6H0.6v11h7M0.6 6h10.4M5.8 0.6v11" fill="none" stroke="#666" stroke-width="1.1"/><path d="M12.5 7v8M8.5 11h8" stroke="#4a4a4a" stroke-width="2.1"/></svg>
<svg style="left:302px;top:786px" width="17" height="15" viewBox="0 0 17 15"><path d="M0.6 0.6L5 2L10.5 0.6V8M0.6 0.6v11L5 12.5L7 12M5 2v10.5" fill="none" stroke="#666" stroke-width="1.1"/><path d="M12.5 7v8M8.5 11h8" stroke="#4a4a4a" stroke-width="2.1"/></svg>
<div class="a" style="left:0px;top:805px;width:1439px;height:1px;background:#9a9a9a;"></div>
<div class="a" style="left:1438px;top:346px;width:1px;height:39px;background:#8a8a8a;"></div>
</body></html>
